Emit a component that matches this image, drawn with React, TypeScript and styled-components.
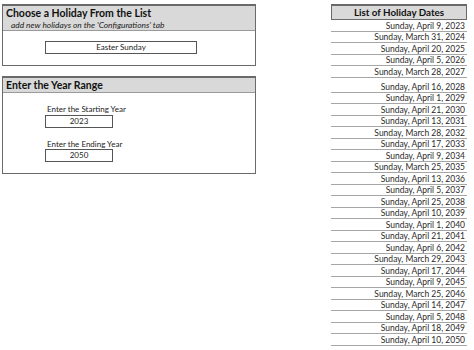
import styled, { createGlobalStyle } from "styled-components";

const GlobalStyle = createGlobalStyle`
    body {
        margin: 0;
        background: #ffffff;
        font-family: Lato, "Liberation Sans", sans-serif;
        color: #1a1a1a;
    }
`

const holidayDates = [
    "Sunday, April 9, 2023",
    "Sunday, March 31, 2024",
    "Sunday, April 20, 2025",
    "Sunday, April 5, 2026",
    "Sunday, March 28, 2027",
    "Sunday, April 16, 2028",
    "Sunday, April 1, 2029",
    "Sunday, April 21, 2030",
    "Sunday, April 13, 2031",
    "Sunday, March 28, 2032",
    "Sunday, April 17, 2033",
    "Sunday, April 9, 2034",
    "Sunday, March 25, 2035",
    "Sunday, April 13, 2036",
    "Sunday, April 5, 2037",
    "Sunday, April 25, 2038",
    "Sunday, April 10, 2039",
    "Sunday, April 1, 2040",
    "Sunday, April 21, 2041",
    "Sunday, April 6, 2042",
    "Sunday, March 29, 2043",
    "Sunday, April 17, 2044",
    "Sunday, April 9, 2045",
    "Sunday, March 25, 2046",
    "Sunday, April 14, 2047",
    "Sunday, April 5, 2048",
    "Sunday, April 18, 2049",
    "Sunday, April 10, 2050",
]

const App = () => {
    return (
        <>
            <GlobalStyle />
            <Sheet>
                <LeftColumn>
                    <Panel $height={62}>
                        <PanelHeader>
                            <PanelTitle>Choose a Holiday From the List</PanelTitle>
                            <PanelNote>add new holidays on the 'Configurations' tab</PanelNote>
                        </PanelHeader>
                        <PanelBody>
                            <InputCell $width={152} $top={10}>Easter Sunday</InputCell>
                        </PanelBody>
                    </Panel>
                    <Panel $height={98}>
                        <PanelHeader>
                            <PanelTitle>Enter the Year Range</PanelTitle>
                        </PanelHeader>
                        <PanelBody>
                            <FieldLabel $top={11}>Enter the Starting Year</FieldLabel>
                            <InputCell $width={68} $top={1}>2023</InputCell>
                            <FieldLabel $top={11}>Enter the Ending Year</FieldLabel>
                            <InputCell $width={68} $top={0}>2050</InputCell>
                        </PanelBody>
                    </Panel>
                </LeftColumn>
                <DateList>
                    <ListHeader>List of Holiday Dates</ListHeader>
                    {holidayDates.map((d, i) => (
                        <DateRow key={d} $tall={i === 5}>{d}</DateRow>
                    ))}
                </DateList>
            </Sheet>
        </>
    )
}

const Sheet = styled.div`
    display: flex;
    align-items: flex-start;
    padding: 4px 0 0 2px;
    gap: 75px;
`

const LeftColumn = styled.div`
    width: 254px;
    display: flex;
    flex-direction: column;
    gap: 10px;
`

const Panel = styled.div<{ $height: number }>`
    height: ${p => p.$height}px;
    box-sizing: border-box;
    border: 1px solid #6a6a6a;
    border-top-width: 2px;
    display: flex;
    flex-direction: column;
`

const PanelHeader = styled.div`
    background: #d9d9d9;
    border-bottom: 1px solid #9a9a9a;
    padding: 0 3px;
    display: flex;
    flex-direction: column;
`

const PanelTitle = styled.div`
    font-weight: 700;
    font-size: 10.5px;
    line-height: 14px;
    color: #111;
`

const PanelNote = styled.div`
    font-style: italic;
    font-size: 8.4px;
    line-height: 10px;
    padding-left: 5px;
    color: #222;
`

const PanelBody = styled.div`
    display: flex;
    flex-direction: column;
    align-items: flex-start;
    padding-left: 42px;
`

const InputCell = styled.div<{ $width: number; $top: number }>`
    width: ${p => p.$width}px;
    height: 13px;
    box-sizing: border-box;
    margin-top: ${p => p.$top}px;
    border: 1px solid #555;
    background: #fff;
    font-size: 8px;
    line-height: 11px;
    text-align: center;
    color: #222;
`

const FieldLabel = styled.div<{ $top: number }>`
    margin-top: ${p => p.$top}px;
    padding-left: 2px;
    font-size: 8px;
    line-height: 10px;
    color: #222;
`

const DateList = styled.div`
    width: 136px;
    display: flex;
    flex-direction: column;
`

const ListHeader = styled.div`
    height: 16px;
    box-sizing: border-box;
    background: #d9d9d9;
    border: 1px solid #6a6a6a;
    border-top-width: 2px;
    font-weight: 700;
    font-size: 9.8px;
    line-height: 13px;
    text-align: center;
    color: #111;
`

const DateRow = styled.div<{ $tall?: boolean }>`
    height: ${p => (p.$tall ? 15 : 11.5)}px;
    box-sizing: border-box;
    border-bottom: 1px solid #a6a6a6;
    display: flex;
    align-items: flex-end;
    justify-content: flex-end;
    padding-right: 2px;
    font-size: 8.5px;
    line-height: 10px;
    color: #2a2a2a;
`

export default App;
